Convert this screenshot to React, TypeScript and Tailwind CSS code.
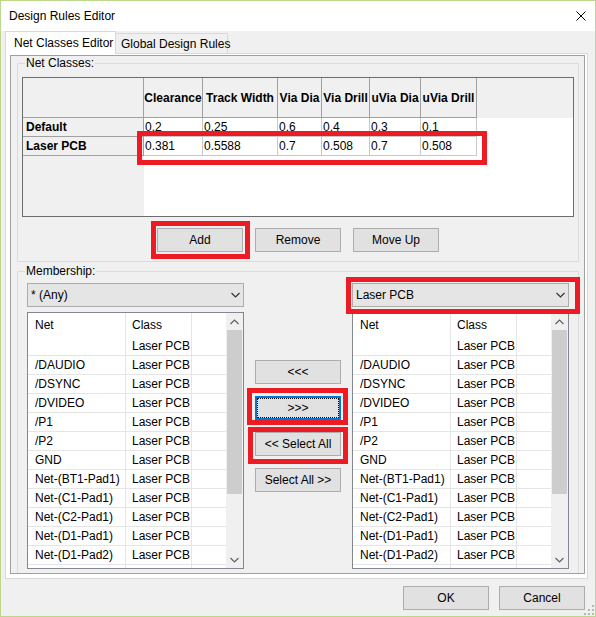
import React from 'react';

const classCols = [
    { name: 'Clearance', w: 'w-[59px]' },
    { name: 'Track Width', w: 'w-[75px]' },
    { name: 'Via Dia', w: 'w-[44px]' },
    { name: 'Via Drill', w: 'w-[48px]' },
    { name: 'uVia Dia', w: 'w-[51px]' },
    { name: 'uVia Drill', w: 'w-[56px]' },
];

const classRows = [
    { name: 'Default', values: ['0.2', '0.25', '0.6', '0.4', '0.3', '0.1'] },
    { name: 'Laser PCB', values: ['0.381', '0.5588', '0.7', '0.508', '0.7', '0.508'] },
];

const nets = [
    '',
    '/DAUDIO',
    '/DSYNC',
    '/DVIDEO',
    '/P1',
    '/P2',
    'GND',
    'Net-(BT1-Pad1)',
    'Net-(C1-Pad1)',
    'Net-(C2-Pad1)',
    'Net-(D1-Pad1)',
    'Net-(D1-Pad2)',
];

const Chevron: React.FC<{ up?: boolean; color?: string }> = ({ up, color = '#333' }) => (
    <svg width="9" height="6" viewBox="0 0 9 6">
        <polyline
            points={up ? '0.5,5 4.5,1 8.5,5' : '0.5,1 4.5,5 8.5,1'}
            fill="none"
            stroke={color}
            strokeWidth="1.2"
        />
    </svg>
);

const Button: React.FC<{ children: React.ReactNode; focused?: boolean }> = ({ children, focused }) =>
    focused ? (
        <button className="relative w-[86px] h-[24px] border-2 border-[#0078d7] bg-[#e1e1e1] flex items-center justify-center">
            <span className="absolute inset-0 border border-dotted border-black"></span>
            {children}
        </button>
    ) : (
        <button className="w-[86px] h-[24px] border border-[#adadad] bg-[#e1e1e1] flex items-center justify-center">
            {children}
        </button>
    );

const Combo: React.FC<{ value: string }> = ({ value }) => (
    <div className="h-[24px] border border-[#acacac] bg-[#e5e5e5] flex items-center justify-between pl-[3px] pr-[3px]">
        <span>{value}</span>
        <Chevron />
    </div>
);

const Scrollbar: React.FC = () => (
    <div className="w-[17px] bg-[#f0f0f0] flex flex-col">
        <div className="h-[17px] flex items-center justify-center">
            <Chevron up color="#606060" />
        </div>
        <div className="flex-1">
            <div className="mx-px h-[164px] bg-[#cdcdcd]"></div>
        </div>
        <div className="h-[17px] flex items-center justify-center">
            <Chevron color="#606060" />
        </div>
    </div>
);

const NetList: React.FC = () => (
    <div className="mt-[5px] h-[257px] border border-[#828790] bg-white flex">
        <div className="flex-1 overflow-hidden flex flex-col">
            <div className="flex h-[24px]">
                <div className="w-[98px] border-r border-[#e5e5e5] pl-[7px] flex items-center">Net</div>
                <div className="w-[66px] border-r border-[#e5e5e5] pl-[6px] flex items-center">Class</div>
                <div className="flex-1"></div>
            </div>
            {nets.map((net, i) => (
                <div key={i} className="flex h-[19px] shrink-0 border-b border-[#e5e5e5]">
                    <div className="w-[98px] border-r border-[#e5e5e5] pl-[7px] flex items-center whitespace-nowrap">{net}</div>
                    <div className="w-[66px] border-r border-[#e5e5e5] pl-[6px] flex items-center whitespace-nowrap">Laser PCB</div>
                    <div className="flex-1"></div>
                </div>
            ))}
            {/* next row, scrolled out of view */}
            <div className="flex flex-1">
                <div className="w-[98px] border-r border-[#e5e5e5]"></div>
                <div className="w-[66px] border-r border-[#e5e5e5]"></div>
            </div>
        </div>
        <Scrollbar />
    </div>
);

const NetClassGrid: React.FC = () => (
    <div className="ml-[4px] mt-[13px] w-[552px] h-[140px] border border-[#6d6d6d] bg-white flex flex-col overflow-hidden">
        {/* column labels */}
        <div className="flex h-[40px] bg-[#f0f0f0]">
            <div className="w-[121px] border-r border-b border-[#a0a0a0]"></div>
            {classCols.map((c) => (
                <div key={c.name} className={`${c.w} border-r border-b border-[#a0a0a0] flex items-center justify-center font-bold whitespace-nowrap`}>
                    {c.name}
                </div>
            ))}
            <div className="flex-1"></div>
        </div>
        {classRows.map((r) => (
            <div key={r.name} className="flex h-[19px]">
                <div className="w-[121px] bg-[#f0f0f0] border-r border-b border-[#a0a0a0] pl-[3px] flex items-center font-bold">
                    {r.name}
                </div>
                {r.values.map((v, i) => (
                    <div key={i} className={`${classCols[i].w} border-r border-b border-[#c8c8c8] pl-[1px] flex items-center`}>
                        {v}
                    </div>
                ))}
                <div className="flex-1"></div>
            </div>
        ))}
        <div className="flex flex-1">
            <div className="w-[121px] bg-[#f0f0f0]"></div>
            <div className="flex-1"></div>
        </div>
    </div>
);

const GroupLabel: React.FC<{ children: React.ReactNode }> = ({ children }) => (
    <span className="absolute left-[7px] -top-[8px] bg-[#f0f0f0] px-px leading-[14px]">{children}</span>
);

export default function App() {
    return (
        <div className="relative w-[596px] h-[617px] border border-[#bcd78c] bg-[#f0f0f0] flex flex-col overflow-hidden font-['Liberation_Sans',Arial,sans-serif] text-[12px] leading-[14px] text-black">
            {/* title bar */}
            <div className="h-[30px] bg-white flex items-center justify-between pl-[8px] pr-[9px]">
                <span>Design Rules Editor</span>
                <svg width="10" height="10" viewBox="0 0 10 10">
                    <path d="M0.5 0.5 L9.5 9.5 M9.5 0.5 L0.5 9.5" stroke="#000" strokeWidth="1" />
                </svg>
            </div>

            {/* tabs */}
            <div className="h-[22px] flex items-end pl-[4px]">
                <div className="relative z-10 -mb-px h-[23px] w-[111px] border border-b-0 border-[#d9d9d9] bg-white pl-[8px] flex items-center whitespace-nowrap">
                    Net Classes Editor
                </div>
                <div className="h-[20px] w-[112px] border border-l-0 border-b-0 border-[#d9d9d9] bg-[#f0f0f0] pl-[5px] flex items-center whitespace-nowrap">
                    Global Design Rules
                </div>
            </div>

            {/* tab page */}
            <div className="pl-[4px] pr-[7px]">
                <div className="h-[526px] border border-[#d9d9d9] bg-white pl-[4px] pt-px">
                    <div className="w-[575px] h-[519px] border border-[#a0a0a0] bg-[#f0f0f0] flex flex-col">
                        <div className="relative mt-[7px] ml-[6px] w-[562px] h-[199px] border border-[#dcdcdc]">
                            <GroupLabel>Net Classes:</GroupLabel>
                            <NetClassGrid />
                            <div className="mt-[11px] flex justify-center gap-[12px]">
                                <Button>Add</Button>
                                <Button>Remove</Button>
                                <Button>Move Up</Button>
                            </div>
                        </div>

                        <div className="relative mt-[9px] ml-[6px] w-[562px] flex-1 border border-b-0 border-[#dcdcdc]">
                            <GroupLabel>Membership:</GroupLabel>
                            <div className="ml-[9px] mt-[11px] flex">
                                <div className="w-[217px]">
                                    <Combo value="* (Any)" />
                                    <NetList />
                                </div>
                                <div className="w-[86px] mx-[11px] pt-[77px] flex flex-col gap-[12px]">
                                    <Button>&lt;&lt;&lt;</Button>
                                    <Button focused>&gt;&gt;&gt;</Button>
                                    <Button>&lt;&lt; Select All</Button>
                                    <Button>Select All &gt;&gt;</Button>
                                </div>
                                <div className="w-[217px]">
                                    <Combo value="Laser PCB" />
                                    <NetList />
                                </div>
                            </div>
                        </div>
                    </div>
                </div>
            </div>

            {/* dialog buttons */}
            <div className="flex-1 flex justify-end gap-[10px] pt-[7px] pr-[10px]">
                <Button>OK</Button>
                <Button>Cancel</Button>
            </div>

            {/* size grip */}
            <svg className="absolute right-[1px] bottom-[1px]" width="10" height="10" viewBox="0 0 10 10">
                {[[8, 0], [8, 4], [4, 4], [8, 8], [4, 8], [0, 8]].map(([x, y], i) => (
                    <rect key={i} x={x} y={y} width="2" height="2" fill="#b8b8b8" />
                ))}
            </svg>

            {/* red markup boxes */}
            <div className="absolute left-[136px] top-[130px] w-[350px] h-[34px] border-[5px] border-[#ed1c24]"></div>
            <div className="absolute left-[150px] top-[220px] w-[99px] h-[38px] border-[5px] border-[#ed1c24]"></div>
            <div className="absolute left-[345px] top-[276px] w-[234px] h-[37px] border-[5px] border-[#ed1c24]"></div>
            <div className="absolute left-[246px] top-[387px] w-[101px] h-[37px] border-[5px] border-[#ed1c24]"></div>
            <div className="absolute left-[247px] top-[426px] w-[100px] h-[37px] border-[5px] border-[#ed1c24]"></div>
        </div>
    );
}
